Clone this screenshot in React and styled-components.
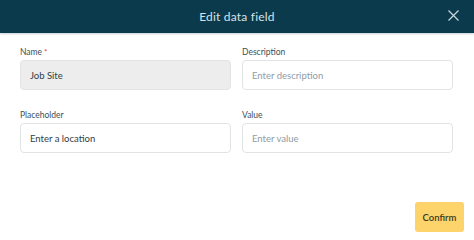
import React from 'react';
import styled, { createGlobalStyle } from 'styled-components';

const GlobalStyle = createGlobalStyle`
  html, body {
    margin: 0;
    padding: 0;
    background: #ffffff;
  }
  body {
    font-family: Lato, "Open Sans", "Liberation Sans", sans-serif;
  }
  * {
    box-sizing: border-box;
  }
`;

const Modal = styled.div`
  width: 474px;
  height: 240px;
  display: flex;
  flex-direction: column;
  background: #fff;
`;

const Header = styled.header`
  height: 33px;
  flex: none;
  background: #0b3a4c;
  display: flex;
  align-items: center;
  justify-content: center;
  position: relative;
  box-shadow: 0 1px 2px rgba(11, 58, 76, 0.25);
`;

const Title = styled.h1`
  margin: 0;
  font-size: 12px;
  font-weight: 400;
  color: #d6e3e9;
  letter-spacing: 0.2px;
`;

const CloseButton = styled.button`
  position: absolute;
  right: 15px;
  top: 10px;
  width: 11px;
  height: 11px;
  padding: 0;
  border: none;
  background: transparent;
  cursor: pointer;
  display: flex;

  svg {
    width: 11px;
    height: 11px;
  }
`;

const Body = styled.div`
  flex: 1;
  display: flex;
  flex-direction: column;
  padding: 13px 21px 8px 20px;
`;

const Grid = styled.div`
  display: grid;
  grid-template-columns: 1fr 1fr;
  column-gap: 11px;
  row-gap: 19px;
`;

const Field = styled.label`
  display: flex;
  flex-direction: column;
  gap: 2px;
`;

const Label = styled.span`
  font-size: 8.5px;
  line-height: 12px;
  color: #3b4f59;
`;

const Required = styled.span`
  color: #e0443a;
  margin-left: 2px;
  font-size: 8px;
  vertical-align: top;
`;

const Input = styled.input`
  height: 30px;
  width: 100%;
  padding: 0 9px;
  border-radius: 4px;
  border: 1px solid ${(p) => (p.disabled ? '#e3e3e3' : '#e1e4e6')};
  background: ${(p) => (p.disabled ? '#ededed' : '#ffffff')};
  font-family: inherit;
  font-size: 9.5px;
  color: #2c3e47;
  outline: none;

  &::placeholder {
    color: #8f9ca4;
  }

  &:disabled {
    color: #2c3e47;
  }
`;

const Footer = styled.div`
  margin-top: auto;
  display: flex;
  justify-content: flex-end;
  margin-right: -11px;
`;

const ConfirmButton = styled.button`
  width: 49px;
  height: 30px;
  border: none;
  border-radius: 3px;
  background: #fdd36b;
  color: #3a3a22;
  font-family: inherit;
  font-size: 9.5px;
  font-weight: 600;
  cursor: pointer;
`;

export default function App() {
  return (
    <>
      <GlobalStyle />
      <Modal>
        <Header>
          <Title>Edit data field</Title>
          <CloseButton type="button" aria-label="Close">
            <svg viewBox="0 0 11 11" fill="none" stroke="#c9d8df" strokeWidth="1.2">
              <path d="M0.5 0.5L10.5 10.5M10.5 0.5L0.5 10.5" />
            </svg>
          </CloseButton>
        </Header>
        <Body>
          <Grid>
            <Field>
              <Label>
                Name<Required>*</Required>
              </Label>
              <Input value="Job Site" disabled readOnly />
            </Field>
            <Field>
              <Label>Description</Label>
              <Input placeholder="Enter description" />
            </Field>
            <Field>
              <Label>Placeholder</Label>
              <Input defaultValue="Enter a location" />
            </Field>
            <Field>
              <Label>Value</Label>
              <Input placeholder="Enter value" />
            </Field>
          </Grid>
          <Footer>
            <ConfirmButton type="button">Confirm</ConfirmButton>
          </Footer>
        </Body>
      </Modal>
    </>
  );
}
